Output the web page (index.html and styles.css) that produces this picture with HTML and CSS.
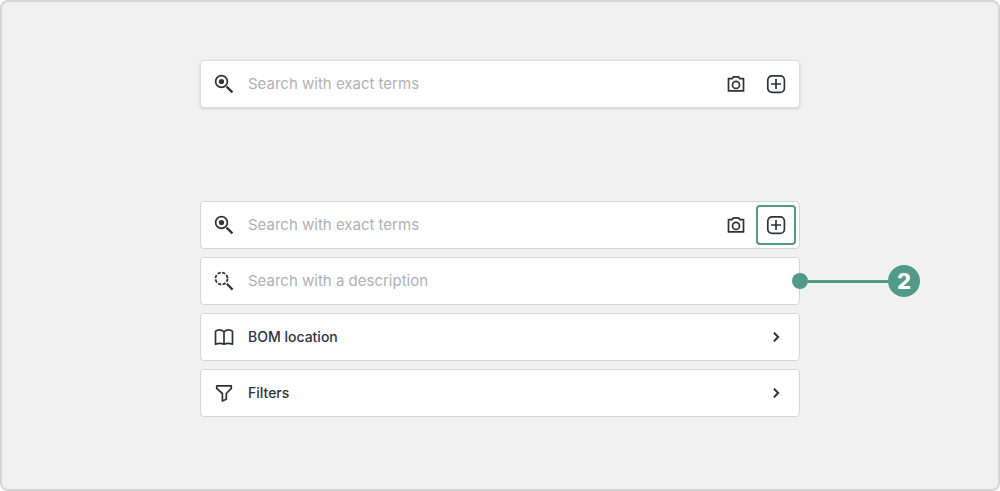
FILE: index.html
```html
<!DOCTYPE html>
<html lang="en">
<head>
    <meta charset="UTF-8">
    <meta name="viewport" content="width=device-width, initial-scale=1.0">
    <title>Search</title>
    <link rel="stylesheet" href="styles.css">
</head>
<body>
    <main class="frame">

        <!-- Collapsed search -->
        <form class="row raised">
            <label class="icon" for="searchExact" aria-label="Exact terms">
                <svg viewBox="0 0 24 24"><circle cx="9.5" cy="9.5" r="5.9"/><circle class="solid" cx="9.5" cy="9.5" r="2.6"/><path class="handle" d="M14.6 14.6l5.8 5.8"/></svg>
            </label>
            <input id="searchExact" type="text" placeholder="Search with exact terms">
            <button type="button" class="icon-button" aria-label="Search by image">
                <svg viewBox="0 0 24 24"><path d="M4.5 6.6h3.6L9.500 4.900h5l1.400 1.700h3.600v12.300h-15z"/><circle cx="12" cy="12.900" r="3.500"/></svg>
            </button>
            <button type="button" class="icon-button" aria-label="More options">
                <svg viewBox="0 0 24 24"><rect x="3.8" y="3.8" width="16.6" height="16.6" rx="4.2"/><path d="M12 7v10M7 12h10"/></svg>
            </button>
        </form>

        <!-- Expanded search -->
        <form class="panel">
            <div class="row">
                <label class="icon" for="searchExactOpen" aria-label="Exact terms">
                    <svg viewBox="0 0 24 24"><circle cx="9.5" cy="9.5" r="5.9"/><circle class="solid" cx="9.5" cy="9.5" r="2.6"/><path class="handle" d="M14.6 14.6l5.8 5.8"/></svg>
                </label>
                <input id="searchExactOpen" type="text" placeholder="Search with exact terms">
                <button type="button" class="icon-button" aria-label="Search by image">
                    <svg viewBox="0 0 24 24"><path d="M4.5 6.6h3.6L9.500 4.900h5l1.400 1.700h3.600v12.300h-15z"/><circle cx="12" cy="12.900" r="3.500"/></svg>
                </button>
                <button type="button" class="icon-button active" aria-label="Fewer options" aria-expanded="true">
                    <svg viewBox="0 0 24 24"><rect x="3.8" y="3.8" width="16.6" height="16.6" rx="4.2"/><path d="M12 7v10M7 12h10"/></svg>
                </button>
            </div>

            <div class="row">
                <label class="icon" for="searchDescription" aria-label="Description">
                    <svg viewBox="0 0 24 24"><circle class="dashed" cx="9.5" cy="9.5" r="6"/><path class="handle" d="M14.8 14.8l5.8 5.8"/></svg>
                </label>
                <input id="searchDescription" type="text" placeholder="Search with a description">
                <div class="callout">
                    <span class="callout-dot"></span>
                    <span class="callout-line"></span>
                    <span class="callout-number">2</span>
                </div>
            </div>

            <button type="button" class="row section">
                <span class="icon">
                    <svg viewBox="0 0 24 24"><path d="M12 7C11 5.400 9.500 4.900 7.700 4.900S4.500 5.400 3.500 6.300v12.900c2.600-1.100 6-1.100 8.500 0 2.500-1.100 5.900-1.100 8.500 0V6.300c-1-.9-2.400-1.400-4.200-1.400S13 5.400 12 7zM12 7v12.200"/></svg>
                </span>
                <span class="section-title">BOM location</span>
                <span class="chevron">
                    <svg viewBox="0 0 24 24"><path d="M9.900 7.700l4.300 4.300-4.300 4.300"/></svg>
                </span>
            </button>

            <button type="button" class="row section">
                <span class="icon">
                    <svg viewBox="0 0 24 24"><path d="M4.700 4.800h14.600v2.500l-5 5.200v5.800l-3.900 1.700v-7.500L4.700 7.300z"/></svg>
                </span>
                <span class="section-title">Filters</span>
                <span class="chevron">
                    <svg viewBox="0 0 24 24"><path d="M9.900 7.700l4.300 4.300-4.300 4.300"/></svg>
                </span>
            </button>
        </form>

    </main>
</body>
</html>
```

FILE: styles.css
```css
* {
    box-sizing: border-box;
}

body {
    margin: 0;
    background: white;
    font-family: Inter, "Liberation Sans", sans-serif;
    color: #2f323c;
}

.frame {
    min-height: 100vh;
    padding: 58px calc(20% - 2px);
    display: flex;
    flex-direction: column;
    gap: 93px;
    background: #f1f1f1;
    border: 2px solid #d5d5d5;
    border-radius: 8px;
}

.panel {
    display: flex;
    flex-direction: column;
    gap: 8px;
}

.row {
    position: relative;
    display: flex;
    align-items: center;
    width: 100%;
    height: 48px;
    padding: 0 3px 0 11px;
    background: white;
    border: 1px solid #d5d5d5;
    border-radius: 4px;
}

.raised {
    border-color: #dcdcdc;
    box-shadow: 0 1px 3px rgba(0, 0, 0, 0.15);
}

.icon {
    display: flex;
    margin-right: 12px;
}

svg {
    display: block;
    width: 24px;
    height: 24px;
    fill: none;
    stroke: #2f323c;
    stroke-width: 1.7;
    stroke-linejoin: round;
}

.solid {
    fill: #2f323c;
    stroke: none;
}

.handle {
    stroke-width: 2.2;
}

.dashed {
    stroke-width: 1.8;
    stroke-dasharray: 3.3 1.4;
}

input {
    flex: 1;
    min-width: 0;
    padding: 0;
    border: none;
    outline: none;
    background: none;
    font: 400 15px/24px Inter, "Liberation Sans", sans-serif;
    color: #2f323c;
}

input::placeholder {
    color: #b0b1b4;
    opacity: 1;
}

.icon-button {
    display: flex;
    align-items: center;
    justify-content: center;
    width: 40px;
    height: 40px;
    padding: 0;
    background: none;
    border: 2px solid transparent;
    border-radius: 4px;
    cursor: pointer;
}

.icon-button.active {
    border-color: #519a87;
}

.section {
    font: 500 14px/24px Inter, "Liberation Sans", sans-serif;
    color: #2f323c;
    text-align: left;
    cursor: pointer;
}

.section-title {
    flex: 1;
}

.chevron {
    padding: 0 8px;
}

.chevron svg {
    stroke-width: 2;
    stroke-linejoin: miter;
}

/* numbered marker on the right edge of a row */
.callout {
    position: absolute;
    top: 7px;
    left: calc(100% - 7px);
    display: flex;
    align-items: center;
}

.callout-dot {
    width: 16px;
    height: 16px;
    border-radius: 50%;
    background: #519a87;
}

.callout-line {
    width: 80px;
    height: 3px;
    background: #519a87;
}

.callout-number {
    width: 32px;
    height: 32px;
    border-radius: 50%;
    background: #519a87;
    color: white;
    font-size: 22px;
    font-weight: 800;
    line-height: 32px;
    text-align: center;
}
```
